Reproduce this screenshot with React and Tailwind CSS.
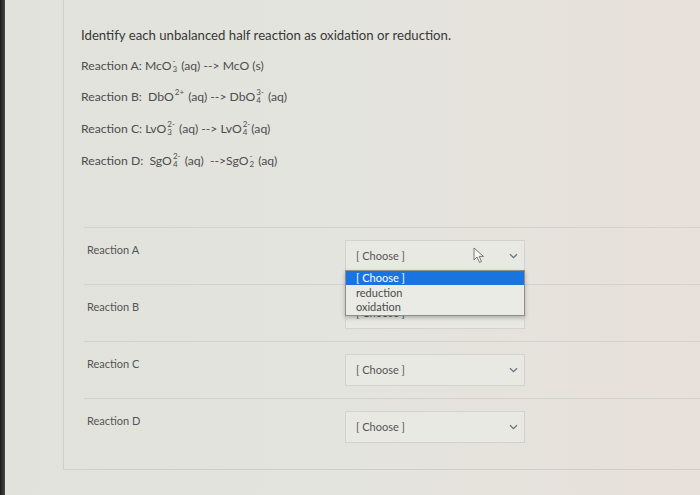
import React from "react";

const font = { fontFamily: "Lato, 'Open Sans', sans-serif" };

// sub + sup stacked at the same x, as the quiz renders charges
const Ion = ({ sub, sup }) => (
  <span className="inline-flex flex-col align-middle leading-none text-[8px] mx-[1px] -mt-[4px]">
    <span className="h-[7px]">{sup || "\u00a0"}</span>
    <span className="h-[7px] mt-[1px]">{sub || "\u00a0"}</span>
  </span>
);

const Chevron = () => (
  <svg width="9" height="6" viewBox="0 0 9 6" className="text-gray-500">
    <path d="M1 1.2 L4.5 4.6 L8 1.2" fill="none" stroke="currentColor" strokeWidth="1.3" />
  </svg>
);

const SelectBox = ({ children }) => (
  <div className="w-[180px] h-[32px] border border-[#d3d3ce] bg-[#e9e9e4] flex items-center justify-between pl-[10px] pr-[6px] text-[11px] text-[#555]">
    <span>{children}</span>
    <Chevron />
  </div>
);

const Row = ({ label, last, children }) => (
  <div className={`border-t border-[#d2d2cc] flex ${last ? "h-[72px]" : "h-[57px]"}`}>
    <div className="w-[261px] pl-[3px] pt-[15px] text-[11px] text-[#555] leading-[14px]">{label}</div>
    <div className="pt-[12px] relative">{children}</div>
  </div>
);

export default function App() {
  return (
    <div
      className="w-[700px] h-[495px] overflow-hidden relative flex bg-gradient-to-r from-[#e1e2dc] via-[#e4e4de] to-[#e8e0db]"
      style={font}
    >
      <div className="w-[5px] h-full bg-gradient-to-r from-[#1d1c1a] to-[#4a4945]" />
      <div className="w-[58px] h-full" />
      <div className="flex-1">
        <div className="h-[470px] border-l border-b border-[#cfcfc9] pl-[17px] pt-[21px]">
          <div className="h-[30px] flex items-center text-[13.2px] text-[#383838]">
            Identify each unbalanced half reaction as oxidation or reduction.
          </div>
          <div className="text-[12.2px] text-[#4e4e4e]">
            <div className="h-[30px] flex items-center">
              <span>
                Reaction A: McO<Ion sub="3" sup="-" /> (aq) --&gt; McO (s)
              </span>
            </div>
            <div className="h-[32px] flex items-center">
              <span>
                Reaction B:&nbsp; DbO<Ion sup="2+" /> (aq) --&gt; DbO<Ion sub="4" sup="3-" /> (aq)
              </span>
            </div>
            <div className="h-[32px] flex items-center">
              <span>
                Reaction C: LvO<Ion sub="3" sup="2-" /> (aq) --&gt; LvO<Ion sub="4" sup="2-" />(aq)
              </span>
            </div>
            <div className="h-[32px] flex items-center">
              <span>
                Reaction D:&nbsp; SgO<Ion sub="4" sup="2-" /> (aq) &nbsp;--&gt;SgO<Ion sub="2" sup="-" /> (aq)
              </span>
            </div>
          </div>

          <div className="mt-[50px] ml-[3px]">
            <Row label="Reaction A">
              <SelectBox>[ Choose ]</SelectBox>
              <div className="absolute left-0 top-[42px] w-[180px] border border-[#8e8e8a] bg-[#ebebe6] shadow-[0_2px_4px_rgba(0,0,0,0.25)] text-[11px] leading-[14px] text-[#4a4a4a] z-10">
                <div className="bg-[#1a74e0] text-white pl-[10px] h-[14px]">[ Choose ]</div>
                <div className="pl-[10px] h-[15px] pt-[1px]">reduction</div>
                <div className="pl-[10px] h-[15px]">oxidation</div>
              </div>
              <svg
                width="14"
                height="18"
                viewBox="0 0 14 18"
                className="absolute left-[128px] top-[19px] z-20"
              >
                <path
                  d="M1 1 L1 13 L4 10 L6.5 15.5 L8.5 14.5 L6.2 9.4 L10.5 9.4 Z"
                  fill="#f4f4f2"
                  stroke="#6b6b6b"
                  strokeWidth="0.9"
                  strokeLinejoin="round"
                />
              </svg>
            </Row>
            <Row label="Reaction B">
              <SelectBox>[ Choose ]</SelectBox>
            </Row>
            <Row label="Reaction C">
              <SelectBox>[ Choose ]</SelectBox>
            </Row>
            <Row label="Reaction D" last>
              <SelectBox>[ Choose ]</SelectBox>
            </Row>
          </div>
        </div>
      </div>
    </div>
  );
}
